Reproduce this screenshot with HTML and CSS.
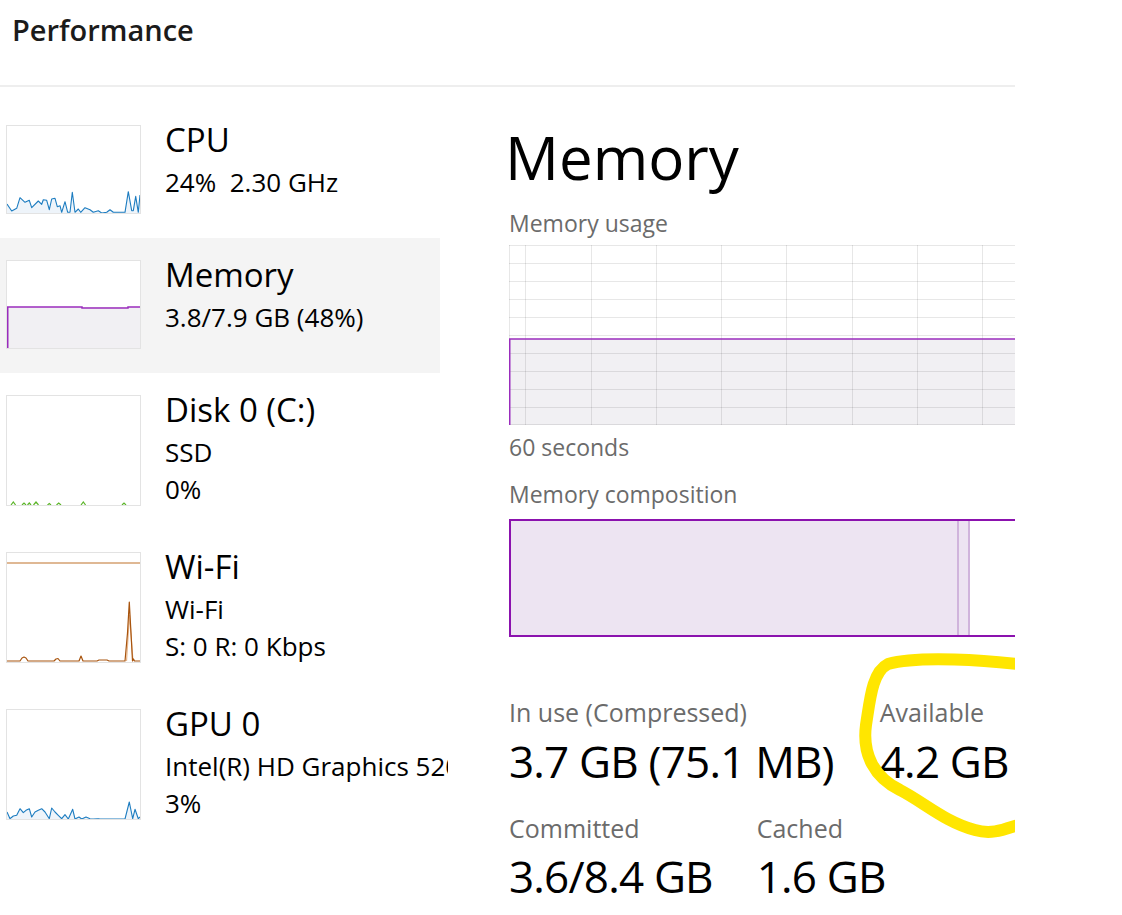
FILE: index.html
```html
<!DOCTYPE html>
<html lang="en">
<head>
<meta charset="utf-8">
<title>Performance</title>
<link rel="stylesheet" href="styles.css">
</head>
<body>
<div class="app">
  <header class="header"><h1 class="page-title">Performance</h1></header>
  <div class="content">
    <nav class="sidebar">
      <div class="item">
        <div class="thumb">
          <svg width="133" height="30" viewBox="0 0 133 30">
            <polygon fill="#eef4fa" points="0,21 4.7,28 9.7,25.3 13,14.7 18,19.3 22.3,17.3 24.7,24.7 31.3,18 34.7,21.3 36.3,16.7 39.7,17.3 42.3,26.7 44.7,16 48,15.3 50.3,23.7 53,22.7 54.7,29.3 58,18.7 60.7,29.3 63,29.3 65.3,9.3 68,29.3 71.3,26 73.7,29.3 78,24.7 83,26.7 86.3,29.3 91.3,27.7 94.7,30 99.7,29.3 103,26.7 106.3,29.3 118,29.3 121.3,8.7 124.7,27.7 126.3,27.7 128.7,13.3 131.3,29.3 133,12 133,30 0,30"/>
            <polyline fill="none" stroke="#1c7cc0" stroke-width="1.1" stroke-linejoin="round" points="0,21 4.7,28 9.7,25.3 13,14.7 18,19.3 22.3,17.3 24.7,24.7 31.3,18 34.7,21.3 36.3,16.7 39.7,17.3 42.3,26.7 44.7,16 48,15.3 50.3,23.7 53,22.7 54.7,29.3 58,18.7 60.7,29.3 63,29.3 65.3,9.3 68,29.3 71.3,26 73.7,29.3 78,24.7 83,26.7 86.3,29.3 91.3,27.7 94.7,30 99.7,29.3 103,26.7 106.3,29.3 118,29.3 121.3,8.7 124.7,27.7 126.3,27.7 128.7,13.3 131.3,29.3 133,12"/>
          </svg>
        </div>
        <div class="info">
          <div class="name">CPU</div>
          <div class="sub">24%&nbsp; 2.30 GHz</div>
        </div>
      </div>

      <div class="item selected">
        <div class="thumb">
          <svg width="133" height="87" viewBox="0 0 133 87">
            <rect x="0" y="46" width="133" height="41" fill="#f1f0f3"/>
            <polyline fill="none" stroke="#9a2cbd" stroke-width="1.5" points="0.75,87 0.75,46 75,46 75,47 121,47 121,46 133,46"/>
          </svg>
        </div>
        <div class="info">
          <div class="name">Memory</div>
          <div class="sub">3.8/7.9 GB (48%)</div>
        </div>
      </div>

      <div class="item">
        <div class="thumb tall">
          <svg width="133" height="8" viewBox="0 0 133 8">
            <path fill="none" stroke="#5cb52a" stroke-width="1.2" d="M4 8 L6.3 5 L8.6 8 M15 8 L17 6 L19 8 M20.5 8 L22.3 6 L24 8 M26.5 8 L29 5 L31.5 8 M40.5 8 L42.3 6.5 L44 8 M49.5 8 L51.7 6 L54 8 M74 8 L76.3 5 L78.6 8 M115 8 L117 6 L119 8"/>
          </svg>
        </div>
        <div class="info">
          <div class="name">Disk 0 (C:)</div>
          <div class="sub">SSD</div>
          <div class="sub">0%</div>
        </div>
      </div>

      <div class="item">
        <div class="thumb tall">
          <svg width="133" height="109" viewBox="0 0 133 109">
            <line x1="0" y1="10" x2="133" y2="10" stroke="#d4a071" stroke-width="1.3"/>
            <polyline fill="none" stroke="#e9b98f" stroke-width="1.2" points="119.5,108 122.5,62 126,108"/>
            <polyline fill="none" stroke="#a8540e" stroke-width="1.2" stroke-linejoin="round" points="0,108 13,108 15,105 17,104 19,105 21,108 47,108 49,106 51,105.5 53,108 72,108 74,103 76,108 90,108 92,107 100,107 102,108 118,108 120.5,80 122.3,49 124,80 125.5,108 126.5,106 127.5,108 133,108"/>
          </svg>
        </div>
        <div class="info">
          <div class="name">Wi-Fi</div>
          <div class="sub">Wi-Fi</div>
          <div class="sub">S: 0 R: 0 Kbps</div>
        </div>
      </div>

      <div class="item">
        <div class="thumb tall">
          <svg width="133" height="30" viewBox="0 0 133 30">
            <polygon fill="#eef4fa" points="0,23 3,29.7 6.3,27 9.7,26.3 13,19.7 16.3,23.7 19,21.3 22.3,19.7 24.7,28 28,23 31.3,21.3 34.7,19.7 38,23 42.3,29.7 44.7,19 48,23 51.3,26.3 54.7,29.7 58,25.7 61.3,30 65.7,20.3 68,30 72,28 74.7,30 79,28 83,29.7 86.3,30 91.3,29.7 93,30 118,30 122.3,13 125.7,29.7 128,20.3 131.3,29.7 133,28 133,30 0,30"/>
            <polyline fill="none" stroke="#1c7cc0" stroke-width="1.1" stroke-linejoin="round" points="0,23 3,29.7 6.3,27 9.7,26.3 13,19.7 16.3,23.7 19,21.3 22.3,19.7 24.7,28 28,23 31.3,21.3 34.7,19.7 38,23 42.3,29.7 44.7,19 48,23 51.3,26.3 54.7,29.7 58,25.7 61.3,30 65.7,20.3 68,30 72,28 74.7,30 79,28 83,29.7 86.3,30 91.3,29.7 93,30 118,30 122.3,13 125.7,29.7 128,20.3 131.3,29.7 133,28"/>
          </svg>
        </div>
        <div class="info">
          <div class="name">GPU 0</div>
          <div class="sub">Intel(R) HD Graphics 520</div>
          <div class="sub">3%</div>
        </div>
      </div>
    </nav>

    <main class="detail">
      <h2 class="detail-title">Memory</h2>
      <div class="label">Memory usage</div>
      <svg class="usage-graph" width="540" height="180" viewBox="0 0 540 180">
        <rect x="0" y="94" width="540" height="86" fill="#f1f0f3"/>
        <g stroke="#000" stroke-opacity="0.095" stroke-width="1">
          <line x1="0" y1="0.5" x2="540" y2="0.5"/>
          <line x1="0" y1="18.5" x2="540" y2="18.5"/>
          <line x1="0" y1="36.5" x2="540" y2="36.5"/>
          <line x1="0" y1="54.5" x2="540" y2="54.5"/>
          <line x1="0" y1="72.5" x2="540" y2="72.5"/>
          <line x1="0" y1="90.5" x2="540" y2="90.5"/>
          <line x1="0" y1="108.5" x2="540" y2="108.5"/>
          <line x1="0" y1="126.5" x2="540" y2="126.5"/>
          <line x1="0" y1="144.5" x2="540" y2="144.5"/>
          <line x1="0" y1="162.5" x2="540" y2="162.5"/>
          <line x1="0" y1="179.5" x2="540" y2="179.5"/>
          <line x1="0.5" y1="0" x2="0.5" y2="180"/>
          <line x1="16.5" y1="0" x2="16.5" y2="180"/>
          <line x1="82.5" y1="0" x2="82.5" y2="180"/>
          <line x1="147.5" y1="0" x2="147.5" y2="180"/>
          <line x1="212.5" y1="0" x2="212.5" y2="180"/>
          <line x1="277.5" y1="0" x2="277.5" y2="180"/>
          <line x1="343.5" y1="0" x2="343.5" y2="180"/>
          <line x1="408.5" y1="0" x2="408.5" y2="180"/>
          <line x1="473.5" y1="0" x2="473.5" y2="180"/>
          <line x1="538.5" y1="0" x2="538.5" y2="180"/>
        </g>
        <line x1="0" y1="94" x2="540" y2="94" stroke="#9a2cbd" stroke-width="1.5"/>
        <line x1="0.75" y1="94" x2="0.75" y2="180" stroke="#9a2cbd" stroke-width="1.5"/>
      </svg>
      <div class="label label-axis">60 seconds</div>
      <div class="label label-comp">Memory composition</div>
      <div class="comp-bar">
        <div class="seg seg-inuse"></div>
        <div class="seg seg-modified"></div>
      </div>

      <div class="stats">
        <div class="stat-row">
          <div class="stat">
            <div class="stat-label">In use (Compressed)</div>
            <div class="stat-value">3.7 GB (75.1 MB)</div>
          </div>
          <div class="stat">
            <div class="stat-label">Available</div>
            <div class="stat-value">4.2 GB</div>
          </div>
        </div>
        <div class="stat-row stat-row-second">
          <div class="stat">
            <div class="stat-label">Committed</div>
            <div class="stat-value">3.6/8.4 GB</div>
          </div>
          <div class="stat">
            <div class="stat-label">Cached</div>
            <div class="stat-value">1.6 GB</div>
          </div>
        </div>
      </div>
    </main>
  </div>

  <svg class="annotation" width="1015" height="915" viewBox="0 0 1015 915">
    <path fill="none" stroke="#ffe600" stroke-width="12" stroke-linecap="round" stroke-linejoin="round" d="M 1018 664 C 990 661, 920 655, 888 664 C 872 672, 870 700, 866 725 C 862 755, 875 778, 900 790 C 925 803, 945 822, 975 830 C 992 835, 1005 829, 1018 825"/>
  </svg>
</div>
</body>
</html>
```

FILE: styles.css
```css
html, body {
  margin: 0;
  padding: 0;
  background: #ffffff;
}

body {
  font-family: "Open Sans", "Noto Sans", sans-serif;
  color: #000000;
  overflow: hidden;
}

.app {
  position: relative;
  width: 1015px;
  height: 915px;
  overflow: hidden;
}

.header {
  box-sizing: border-box;
  height: 87px;
  padding: 10px 0 0 12px;
  border-bottom: 2px solid #eeeeee;
}

.page-title {
  margin: 0;
  font-size: 29px;
  font-weight: 600;
  line-height: 40px;
  color: #1b1b1b;
}

.content {
  display: flex;
  align-items: flex-start;
}

/* Sidebar */
.sidebar {
  flex: none;
  width: 448px;
  overflow: hidden;
  padding-top: 16px;
}

.item {
  width: 440px;
  display: flex;
  align-items: flex-start;
  padding: 22px 0 24px;
}

.item.selected {
  background: #f4f4f4;
}

.thumb {
  flex: none;
  box-sizing: border-box;
  margin-left: 6px;
  width: 135px;
  height: 89px;
  border: 1px solid #e3e3e3;
  background: #ffffff;
  display: flex;
  flex-direction: column;
  justify-content: flex-end;
}

.thumb.tall {
  height: 111px;
}

.thumb svg {
  display: block;
}

.info {
  margin: -5px 0 -30px 24px;
  white-space: nowrap;
}

.name {
  font-size: 33px;
  line-height: 40px;
  margin-bottom: 4px;
}

.sub {
  font-size: 26px;
  line-height: 37px;
}

/* Detail */
.detail {
  flex: none;
  width: 560px;
  margin-left: 60px;
  padding-top: 34px;
}

.detail-title {
  margin: 0 0 15px -3px;
  font-size: 60px;
  font-weight: 400;
  line-height: 72px;
}

.label {
  padding-left: 1px;
  font-size: 23px;
  line-height: 30px;
  color: #6b6b6b;
}

.usage-graph {
  display: block;
  margin: 7px 0 0 1px;
}

.label-axis {
  margin-top: 7px;
}

.label-comp {
  margin-top: 17px;
}

.comp-bar {
  box-sizing: border-box;
  display: flex;
  width: 560px;
  height: 118px;
  margin: 10px 0 0 1px;
  border: 2px solid #8b12ae;
  border-right: none;
}

.seg {
  background: #ede4f2;
  border-right: 2px solid #d0b4dc;
}

.seg-inuse {
  width: 446px;
}

.seg-modified {
  width: 9px;
}

.stats {
  margin-top: 59px;
  padding-left: 1px;
}

.stat-row {
  display: flex;
  gap: 46px;
}

.stat-row-second {
  margin-top: 25px;
  gap: 44px;
}

.stat-label {
  font-size: 25px;
  line-height: 32px;
  color: #6b6b6b;
}

.stat-value {
  margin-top: 7px;
  font-size: 44px;
  line-height: 52px;
  letter-spacing: -0.8px;
  white-space: nowrap;
}

.stat-row-second .stat-value {
  margin-top: 6px;
}

.annotation {
  position: absolute;
  left: 0;
  top: 0;
  pointer-events: none;
}
```
